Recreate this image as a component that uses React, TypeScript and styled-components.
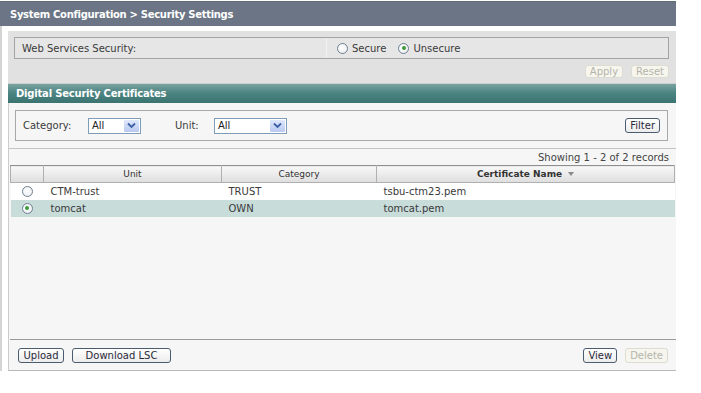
import React from "react";
import styled, { createGlobalStyle, css } from "styled-components";

const GlobalStyle = createGlobalStyle`
  html, body { margin: 0; padding: 0; background: #ffffff; }
  body { font-family: "DejaVu Sans", Verdana, "Liberation Sans", sans-serif; font-size: 10px; color: #3a3a3a; }
  * { box-sizing: border-box; }
`;

const Page = styled.div`
  width: 676px;
`;

const TitleBar = styled.div`
  height: 25px;
  margin-top: 1px;
  background: #6b7585;
  border-top: 1px solid #5f6e6e;
  color: #ffffff;
  font-weight: bold;
  font-size: 10px;
  letter-spacing: -0.3px;
  display: flex;
  align-items: center;
  padding-left: 10px;
`;

const Body = styled.div`
  border-left: 2px solid #d4d4d4;
  padding: 5px 0 0 6px;
`;

const Panel = styled.div`
  width: 668px;
  display: flex;
  flex-direction: column;
`;

const GreySection = styled.div`
  background: #e1e1e1;
  padding: 6px 7px 5px 6px;
  display: flex;
  flex-direction: column;
  gap: 6px;
  border-bottom: 1px solid #cfcfcf;
`;

const SettingBox = styled.div`
  display: grid;
  grid-template-columns: 312px 1fr;
  height: 22px;
  border: 1px solid #a4a4a4;
  background: #e6e6e6;
`;

const SettingLabel = styled.div`
  display: flex;
  align-items: center;
  padding-left: 7px;
  border-right: 1px solid #f2f2f2;
`;

const SettingOptions = styled.div`
  display: flex;
  align-items: center;
  padding-left: 10px;
  gap: 4px;
`;

const RadioLabel = styled.span`
  margin-right: 8px;
`;

const Radio = styled.span<{ $checked?: boolean }>`
  display: inline-block;
  width: 11px;
  height: 11px;
  border-radius: 50%;
  border: 1px solid #6f8192;
  background: radial-gradient(circle at 40% 40%, #ffffff 0%, #eef0f2 70%, #d6dbe0 100%);
  position: relative;
  flex: none;
  ${(p) =>
    p.$checked &&
    css`
      &::after {
        content: "";
        position: absolute;
        left: 2.5px;
        top: 2.5px;
        width: 4px;
        height: 4px;
        border-radius: 50%;
        background: #3c9a3c;
      }
    `}
`;

const ButtonRow = styled.div`
  display: flex;
  justify-content: flex-end;
  align-items: center;
  gap: 8px;
`;

const FooterRow = styled.div`
  flex: 1;
  display: flex;
  justify-content: space-between;
  align-items: center;
`;

const ButtonGroup = styled.div`
  display: flex;
  gap: 8px;
`;

const Button = styled.button<{ $w?: number; $small?: boolean }>`
  height: ${(p) => (p.$small ? "13px" : "15px")};
  min-width: ${(p) => (p.$w ? `${p.$w}px` : "auto")};
  padding: 0 4px;
  font-family: inherit;
  font-size: 10px;
  line-height: ${(p) => (p.$small ? "11px" : "13px")};
  color: #2a2a3a;
  background: linear-gradient(#ffffff, #ececec);
  border: 1px solid #4b5c6e;
  border-radius: 3px;
  cursor: pointer;
  &:disabled {
    color: #b4b4aa;
    background: #f6f6ee;
    border-color: #dcdcd0;
    cursor: default;
  }
`;

const SectionHeader = styled.div`
  height: 19px;
  background: linear-gradient(#7aa3a1 0%, #4d8583 45%, #3b7371 100%);
  color: #ffffff;
  font-weight: bold;
  font-size: 10px;
  letter-spacing: -0.2px;
  display: flex;
  align-items: center;
  padding-left: 8px;
`;

const LowerSection = styled.div`
  background: #f6f6f6;
  border-left: 1px solid #cccccc;
  border-bottom: 1px solid #b8b8b8;
  display: flex;
  flex-direction: column;
`;

const FilterWrap = styled.div`
  padding: 7px 8px 7px 6px;
  border-bottom: 1px solid #c4c4c4;
`;

const FilterBox = styled.div`
  height: 31px;
  border: 1px solid #a8a8a8;
  display: flex;
  align-items: center;
  padding: 0 7px 0 7px;
`;

const FilterLabel = styled.span<{ $w: number }>`
  width: ${(p) => p.$w}px;
`;

const Select = styled.div<{ $w: number }>`
  width: ${(p) => p.$w}px;
  height: 16px;
  border: 1px solid #7f9db9;
  background: #ffffff;
  display: flex;
  align-items: stretch;
  margin-right: 34px;
`;

const SelectValue = styled.span`
  flex: 1;
  padding-left: 3px;
  display: flex;
  align-items: center;
  color: #222;
`;

const SelectArrow = styled.span`
  width: 15px;
  margin: 1px;
  background: linear-gradient(#dfe8fb, #b9c9ef);
  border-radius: 1px;
  display: flex;
  align-items: center;
  justify-content: center;
`;

const Spacer = styled.div`
  flex: 1;
`;

const Records = styled.div`
  height: 16px;
  display: flex;
  align-items: center;
  justify-content: flex-end;
  padding-right: 7px;
  color: #444;
`;

const TableWrap = styled.div`
  margin: 0 0 0 1px;
  height: 175px;
  border-bottom: 1px solid #9a9a9a;
`;

const Table = styled.table`
  width: 665px;
  border-collapse: collapse;
  font-size: 10px;
`;

const Th = styled.th<{ $bold?: boolean }>`
  height: 17px;
  padding: 0;
  font-weight: ${(p) => (p.$bold ? "bold" : "normal")};
  font-size: 9px;
  color: #333;
  background: linear-gradient(#f8f8f8, #dedede);
  border: 1px solid #b0b0b0;
  border-top-color: #8f8f8f;
  text-align: center;
`;

const Tr = styled.tr<{ $selected?: boolean }>`
  background: ${(p) => (p.$selected ? "#c8dcda" : "#ffffff")};
`;

const Td = styled.td`
  height: 17px;
  padding: 0 0 0 7px;
`;

const RadioTd = styled.td`
  height: 17px;
  padding: 0;
  text-align: center;
  vertical-align: middle;
  line-height: 0;
`;

const SortArrow = styled.span`
  display: inline-block;
  margin-left: 6px;
  width: 0;
  height: 0;
  border-left: 3px solid transparent;
  border-right: 3px solid transparent;
  border-top: 4px solid #8a8a8a;
  vertical-align: 1px;
`;

const Footer = styled.div`
  height: 30px;
  padding: 0 8px 0 9px;
  display: flex;
  align-items: center;
`;

const Chevron = () => (
  <svg width="9" height="7" viewBox="0 0 9 7">
    <path d="M1 1.5 L4.5 5 L8 1.5" fill="none" stroke="#3d5fa8" strokeWidth="1.8" />
  </svg>
);

const rows = [
  { unit: "CTM-trust", category: "TRUST", name: "tsbu-ctm23.pem", selected: false },
  { unit: "tomcat", category: "OWN", name: "tomcat.pem", selected: true },
];

export default function App() {
  return (
    <Page>
      <GlobalStyle />
      <TitleBar>System Configuration &gt; Security Settings</TitleBar>
      <Body>
        <Panel>
          <GreySection>
            <SettingBox>
              <SettingLabel>Web Services Security:</SettingLabel>
              <SettingOptions>
                <Radio />
                <RadioLabel>Secure</RadioLabel>
                <Radio $checked />
                <RadioLabel>Unsecure</RadioLabel>
              </SettingOptions>
            </SettingBox>
            <ButtonRow>
              <Button $small $w={37} disabled>Apply</Button>
              <Button $small $w={37} disabled>Reset</Button>
            </ButtonRow>
          </GreySection>
          <SectionHeader>Digital Security Certificates</SectionHeader>
          <LowerSection>
            <FilterWrap>
              <FilterBox>
                <FilterLabel $w={65}>Category:</FilterLabel>
                <Select $w={53}>
                  <SelectValue>All</SelectValue>
                  <SelectArrow>
                    <Chevron />
                  </SelectArrow>
                </Select>
                <FilterLabel $w={39}>Unit:</FilterLabel>
                <Select $w={73}>
                  <SelectValue>All</SelectValue>
                  <SelectArrow>
                    <Chevron />
                  </SelectArrow>
                </Select>
                <Spacer />
                <Button>Filter</Button>
              </FilterBox>
            </FilterWrap>
            <Records>Showing 1 - 2 of 2 records</Records>
            <TableWrap>
              <Table>
                <colgroup>
                  <col style={{ width: 33 }} />
                  <col style={{ width: 178 }} />
                  <col style={{ width: 155 }} />
                  <col />
                </colgroup>
                <thead>
                  <tr>
                    <Th />
                    <Th>Unit</Th>
                    <Th>Category</Th>
                    <Th $bold>
                      Certificate Name
                      <SortArrow />
                    </Th>
                  </tr>
                </thead>
                <tbody>
                  {rows.map((r) => (
                    <Tr key={r.name} $selected={r.selected}>
                      <RadioTd>
                        <Radio $checked={r.selected} />
                      </RadioTd>
                      <Td>{r.unit}</Td>
                      <Td>{r.category}</Td>
                      <Td>{r.name}</Td>
                    </Tr>
                  ))}
                </tbody>
              </Table>
            </TableWrap>
            <Footer>
              <FooterRow>
                <ButtonGroup>
                  <Button $w={46}>Upload</Button>
                  <Button $w={99}>Download LSC</Button>
                </ButtonGroup>
                <ButtonGroup>
                  <Button>View</Button>
                  <Button disabled>Delete</Button>
                </ButtonGroup>
              </FooterRow>
            </Footer>
          </LowerSection>
        </Panel>
      </Body>
    </Page>
  );
}
